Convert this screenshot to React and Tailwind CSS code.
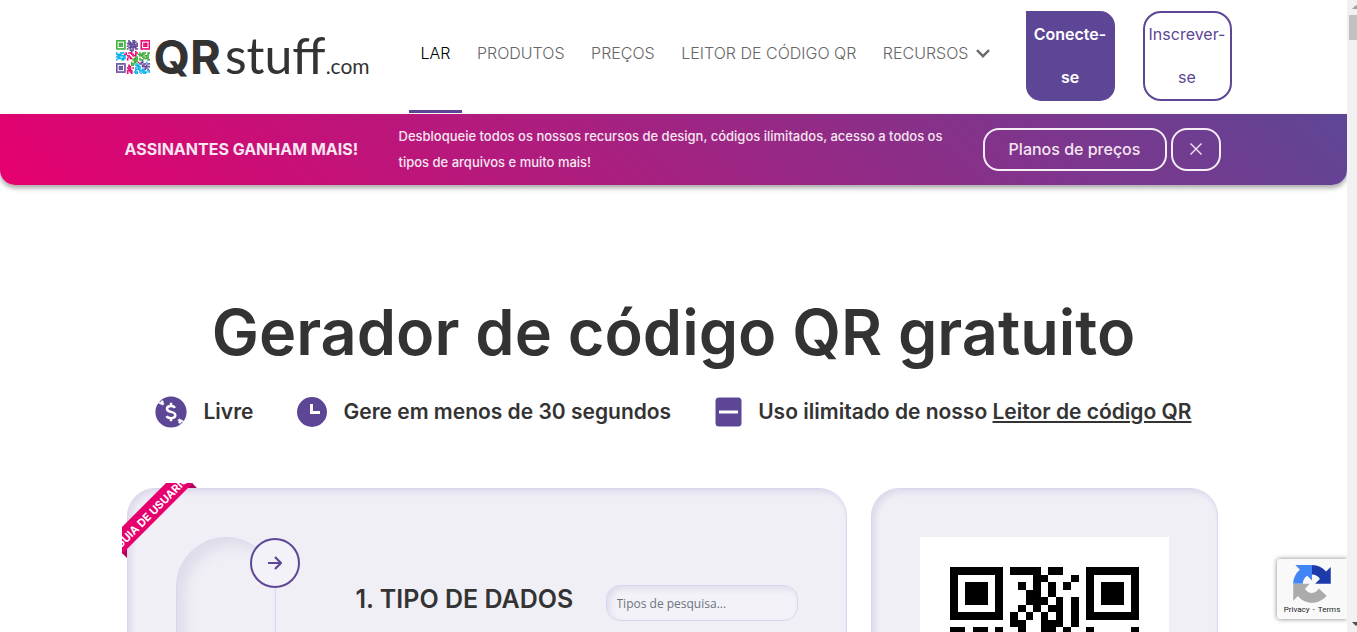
import React from "react";

const QR_ROWS = [
  "#######.####.##...#######",
  "#.....#....##...#.#.....#",
  "#.###.#..#.#.#.#..#.###.#",
  "#.###.#...##.#....#.###.#",
  "#.###.#...###.#.#.#.###.#",
  "#.....#..#.#.##.#.#.....#",
  "#######.#.#.#.#.#.#######",
  "........##..###.#........",
  "##.##.#..#..##.#..#.....#",
  "#..#.##.##.#..##.#.##.#..",
  ".##.#.##..#.##..##..#.##.",
];

const LOGO_COLORS = { g: "#3aaa35", m: "#e6006e", p: "#5e4696", c: "#00aeef" };
const LOGO_ROWS = [
  "ggggggg..p..pp....mmmmmmm",
  "g.....g..pp.ppp...m.....m",
  "g.ggg.g.pppppp.p..m.mmm.m",
  "g.ggg.g..ppppppp..m.mmm.m",
  "g.ggg.g.p.pppppp..m.mmm.m",
  "g.....g..pppppp...m.....m",
  "ggggggg.p.p.p.pp..mmmmmmm",
  "..........ppp............",
  "...........p..m..........",
  "c..ccc.m.mmm..mm.g.ggg.gg",
  "cccc..mm...mm.m.ggggg..g.",
  ".cccccc.mm..mmm..ggg.ggg.",
  "ccc..cc..mm...gg...gg.gg.",
  ".cccccc.m.mm.ggg.g..gggg.",
  "c...cc..m...gggg.ggg...gg",
  ".............ggg...p.....",
  "...........g.gg.m.pp..c..",
  "ppppppp....ggg.c.pp.pp.pp",
  "p.....p..m.gg.ccc..pp.p..",
  "p.ppp.p..mm....ccc.pppppp",
  "p.ppp.p.mmm.m.c.cc...pp..",
  "p.ppp.p..mm...cccc.ccp.p.",
  "p.....p.mmmm..c..cccc..cc",
  "ppppppp.m.mm.ccc.c.cccc.c",
  "........m..m..cc..c.cc...",
];

function LogoMark() {
  return (
    <svg viewBox="0 0 25 25" className="size-[34px] shrink-0" aria-hidden="true">
      {LOGO_ROWS.flatMap((row, y) =>
        [...row].map((c, x) =>
          c === "." ? null : (
            <rect key={`${x}-${y}`} x={x} y={y} width="1.15" height="1.15" fill={LOGO_COLORS[c]} />
          )
        )
      )}
    </svg>
  );
}

function QrCode() {
  return (
    <svg viewBox="0 0 25 25" className="w-full" shapeRendering="crispEdges" role="img" aria-label="QR">
      {QR_ROWS.flatMap((row, y) =>
        [...row].map((c, x) => (c === "#" ? <rect key={`${x}-${y}`} x={x} y={y} width="1" height="1" /> : null))
      )}
    </svg>
  );
}

const NAV = ["LAR", "PRODUTOS", "PREÇOS", "LEITOR DE CÓDIGO QR"];

function Header() {
  return (
    <header className="bg-white">
      <div className="mx-auto flex max-w-[1140px] items-stretch px-3">
        <a href="#inicio" className="flex w-[293px] shrink-0 items-center gap-1 text-[#333]">
          <LogoMark />
          <span className="flex items-baseline pb-1 leading-none">
            <span className="text-[47px] font-bold">QR</span>
            <span className="ml-1 font-[Lato,sans-serif] text-[50px] font-normal">stuff</span>
            <span className="font-[Lato,sans-serif] text-[21px]">.com</span>
          </span>
        </a>
        <nav className="mr-[23px] flex flex-1 justify-between text-base font-light text-[#666]">
          {NAV.map((label, i) => (
            <a
              key={label}
              href="#nav"
              className={
                i === 0
                  ? "mb-px flex items-center border-b-[3px] border-[#5e4696] px-3 pb-1 whitespace-nowrap text-black"
                  : "mb-1 flex items-center px-3 pb-1 whitespace-nowrap"
              }
            >
              {label}
            </a>
          ))}
          <button type="button" className="mb-1 flex items-center gap-2 px-3 pb-1">
            RECURSOS
            <svg viewBox="0 0 14 9" className="w-[14px]" fill="none" stroke="#6b6b6b" strokeWidth="2.4">
              <path d="M1 1.2 7 7.2 13 1.2" />
            </svg>
          </button>
        </nav>
        <div className="flex shrink-0 gap-7 pt-[11px] pb-[13px] text-center text-base leading-[43px]">
          <a href="#entrar" className="w-[89px] rounded-[15px] rounded-tl-none border-2 border-[#5e4696] bg-[#5e4696] font-semibold text-white">
            Conecte-<br />se
          </a>
          <a href="#criar" className="w-[89px] rounded-[18px] border-2 border-[#5e4696] text-[#5e4696]">
            Inscrever-<br />se
          </a>
        </div>
      </div>
    </header>
  );
}

function Banner() {
  return (
    <section className="rounded-b-[15px] bg-[linear-gradient(45deg,#e6006e,#5e4696)] text-[#f6e6f1] shadow-[0_3px_5px_rgba(0,0,0,0.35)]">
      <div className="mx-auto flex max-w-[1140px] items-center pt-[9px] pr-[23px] pb-[10px] pl-[21px]">
        <strong className="w-[274px] shrink-0 text-base font-bold whitespace-nowrap">ASSINANTES GANHAM MAIS!</strong>
        <p className="w-[560px] text-[13px] leading-[26px] font-medium">
          Desbloqueie todos os nossos recursos de design, códigos ilimitados, acesso a todos os
          <br />
          tipos de arquivos e muito mais!
        </p>
        <div className="ml-auto flex gap-1">
          <a href="#planos" className="flex h-[43px] w-[184px] items-center justify-center rounded-[16px] border-2 border-[#f6eef6] text-base font-medium">
            Planos de preços
          </a>
          <button type="button" aria-label="Fechar" className="flex h-[43px] w-[50px] items-center justify-center rounded-[16px] border-2 border-[#f6eef6]">
            <svg viewBox="0 0 12 12" className="size-3" stroke="currentColor" strokeWidth="1.4">
              <path d="M.5.5l11 11M11.5.5l-11 11" />
            </svg>
          </button>
        </div>
      </div>
    </section>
  );
}

function MoneyIcon() {
  return (
    <svg viewBox="0 0 32 32" className="size-8 shrink-0" aria-hidden="true">
      <circle cx="16" cy="16" r="15.6" fill="#5e4696" />
      <path d="M2 5.500l3.500 1 1-1.700 1.800.2-.3 1.800 1.200 1-1.700 1.200-1.500-.8L3.500 7zM30 26.500l-3.500-1-1 1.700-1.800-.2.3-1.800-1.200-1 1.700-1.200 1.500.8L28.500 25z" fill="#fff" stroke="#fff" strokeWidth=".6" />
      <path d="M20 11.800c-.8-1.300-2.200-1.900-4-1.900-2.300 0-4 1-4 2.900s1.700 2.600 4 3.100 4.300 1.200 4.300 3.200-1.900 3.100-4.300 3.100c-2 0-3.600-.7-4.400-2.100M16 6.800v3.300M16 22v3.300" fill="none" stroke="#fff" strokeWidth="2.500" />
    </svg>
  );
}

function ClockIcon() {
  return (
    <svg viewBox="0 0 30 30" className="size-[30px] shrink-0" aria-hidden="true">
      <circle cx="15" cy="15" r="15" fill="#5e4696" />
      <path d="M14.500 7v8.500H23" fill="none" stroke="#fff" strokeWidth="3" />
    </svg>
  );
}

function ScanIcon() {
  return (
    <svg viewBox="0 0 27 30" className="h-[30px] w-[27px] shrink-0" aria-hidden="true">
      <rect x=".5" y=".5" width="26" height="29" rx="3.500" fill="#5e4696" />
      <rect x="4" y="13.500" width="19" height="3" fill="#fff" />
    </svg>
  );
}

function Hero() {
  return (
    <section className="pt-[111px] text-[#333]">
      <h1 className="text-center text-[63px] leading-[72px] font-semibold whitespace-nowrap">Gerador de código QR gratuito</h1>
      <ul className="mx-auto flex max-w-[1140px] items-center justify-center gap-11 pt-7 text-[21px] leading-8 font-semibold whitespace-nowrap">
        <li className="flex items-center gap-4">
          <MoneyIcon />
          Livre
        </li>
        <li className="flex items-center gap-4">
          <ClockIcon />
          Gere em menos de 30 segundos
        </li>
        <li className="flex items-center gap-4">
          <ScanIcon />
          <span>
            Uso ilimitado de nosso{" "}
            <a href="#leitor" className="underline decoration-2 underline-offset-2">
              Leitor de código QR
            </a>
          </span>
        </li>
      </ul>
    </section>
  );
}

function Ribbon() {
  return (
    <div className="absolute -top-[6px] -left-[6px] size-[75px] overflow-hidden">
      <svg viewBox="0 0 75 75" className="absolute inset-0 size-full" aria-hidden="true">
        <path d="M66 0h4l5 5h-9zM0 66v4l5 5v-9z" fill="#b0005c" />
        <path d="M44 0H71L0 71V44z" fill="#e6006e" />
      </svg>
      <span className="absolute top-[19px] -left-[30px] w-[120px] -rotate-45 text-center text-[11px] leading-5 font-bold whitespace-nowrap text-white">
        GUIA DE USUARIO
      </span>
    </div>
  );
}

function Workspace() {
  return (
    <main className="mx-auto flex max-w-[1140px] gap-6 pt-[60px] pr-[26px] pl-[23px]">
      <section className="relative flex flex-1 items-start rounded-[28px] border border-[#dad5ee] bg-[#f0eff6] pt-12 pr-12 pl-12 shadow-[inset_3px_3px_6px_#dcd8ea]">
        <Ribbon />
        <div className="flex h-[600px] w-[100px] shrink-0 items-start rounded-[50px] border border-[#dad5ee] shadow-[inset_8px_8px_14px_#dfdcea]">
          <button
            type="button"
            aria-label="Expandir"
            className="relative left-[73px] flex size-[50px] shrink-0 items-center justify-center rounded-full border-2 border-[#5e4696] bg-[#f3f2f8]"
          >
            <svg viewBox="0 0 14 14" className="size-[14px]" fill="none" stroke="#5e4696" strokeWidth="2.200">
              <path d="M0 7h12.500M7 1l6 6-6 6" />
            </svg>
          </button>
        </div>
        <div className="flex flex-1 items-start justify-between pt-12 pl-20">
          <h2 className="text-[25px] leading-7 font-semibold whitespace-nowrap text-[#333]">1. TIPO DE DADOS</h2>
          <input
            type="text"
            aria-label="Tipos de pesquisa"
            placeholder="Tipos de pesquisa..."
            className="h-9 w-48 rounded-[14px] border border-[#dad5ee] bg-[#f3f2f8] px-[10px] font-['Open_Sans',sans-serif] text-[12px] shadow-[inset_3px_3px_6px_#dedbea] placeholder:text-[#6c757d]"
          />
        </div>
      </section>
      <aside className="w-[347px] shrink-0 rounded-[28px] border border-[#dad5ee] bg-[#f0eff6] p-12 shadow-[inset_3px_3px_6px_#dcd8ea]">
        <div className="bg-white p-[30px]">
          <QrCode />
        </div>
      </aside>
    </main>
  );
}

function Recaptcha() {
  return (
    <div className="absolute right-0 bottom-[13px] flex h-[60px] w-[70px] flex-col items-center rounded-l-[3px] bg-[#f9f9f9] pt-[5px] shadow-[0_0_5px_#808080] [clip-path:inset(-8px_0_-8px_-8px)]">
      <svg viewBox="0 0 64 64" className="size-[40px]" aria-hidden="true">
        <path d="M62 31.600V4.600l-7.500 7.500C49 5.500 41 1.600 32 1.500v15.400c5.600 0 10 2.600 12.700 7L36.900 31.600z" fill="#1c3aa9" />
        <path d="M32 1.500H5.300l7.400 7.500C6 14.500 2 22.500 2 31.600h15.300c0-5.300 2.600-10.100 7-12.800l7.700 7.700z" fill="#4285f4" />
        <path d="M2 31.600v27l7.500-7.500C15 58 23 62 32 62c9.500 0 17.800-4.300 23.300-11.200L43 39.300c-2.700 4.400-6.500 7-11 7-5 0-8.700-2.300-11.300-6.800l7.700-7.900z" fill="#ababab" />
      </svg>
      <span className="flex gap-[3px] font-[Roboto,sans-serif] text-[8px] leading-3 whitespace-nowrap text-[#222]">
        <a href="#privacy">Privacy</a>
        <span>-</span>
        <a href="#terms">Terms</a>
      </span>
    </div>
  );
}

function ScrollTrack() {
  return (
    <div className="flex w-[10px] shrink-0 flex-col overflow-hidden bg-[#f1f1f1] pl-[2px]" aria-hidden="true">
      <svg viewBox="0 0 8 15" className="h-[15px] w-2">
        <path d="M3 9l4-4 4 4z" fill="#a0a0a0" />
      </svg>
      <div className="h-[25px] bg-[#c1c1c1]" />
      <svg viewBox="0 0 8 15" className="mt-auto h-[15px] w-2">
        <path d="M3 5h8l-4 4z" fill="#505050" />
      </svg>
    </div>
  );
}

export default function App() {
  return (
    <div className="flex h-screen overflow-hidden bg-white font-[Inter,sans-serif]">
      <div className="relative min-w-0 flex-1 overflow-hidden">
        <Header />
        <Banner />
        <Hero />
        <Workspace />
        <Recaptcha />
      </div>
      <ScrollTrack />
    </div>
  );
}
